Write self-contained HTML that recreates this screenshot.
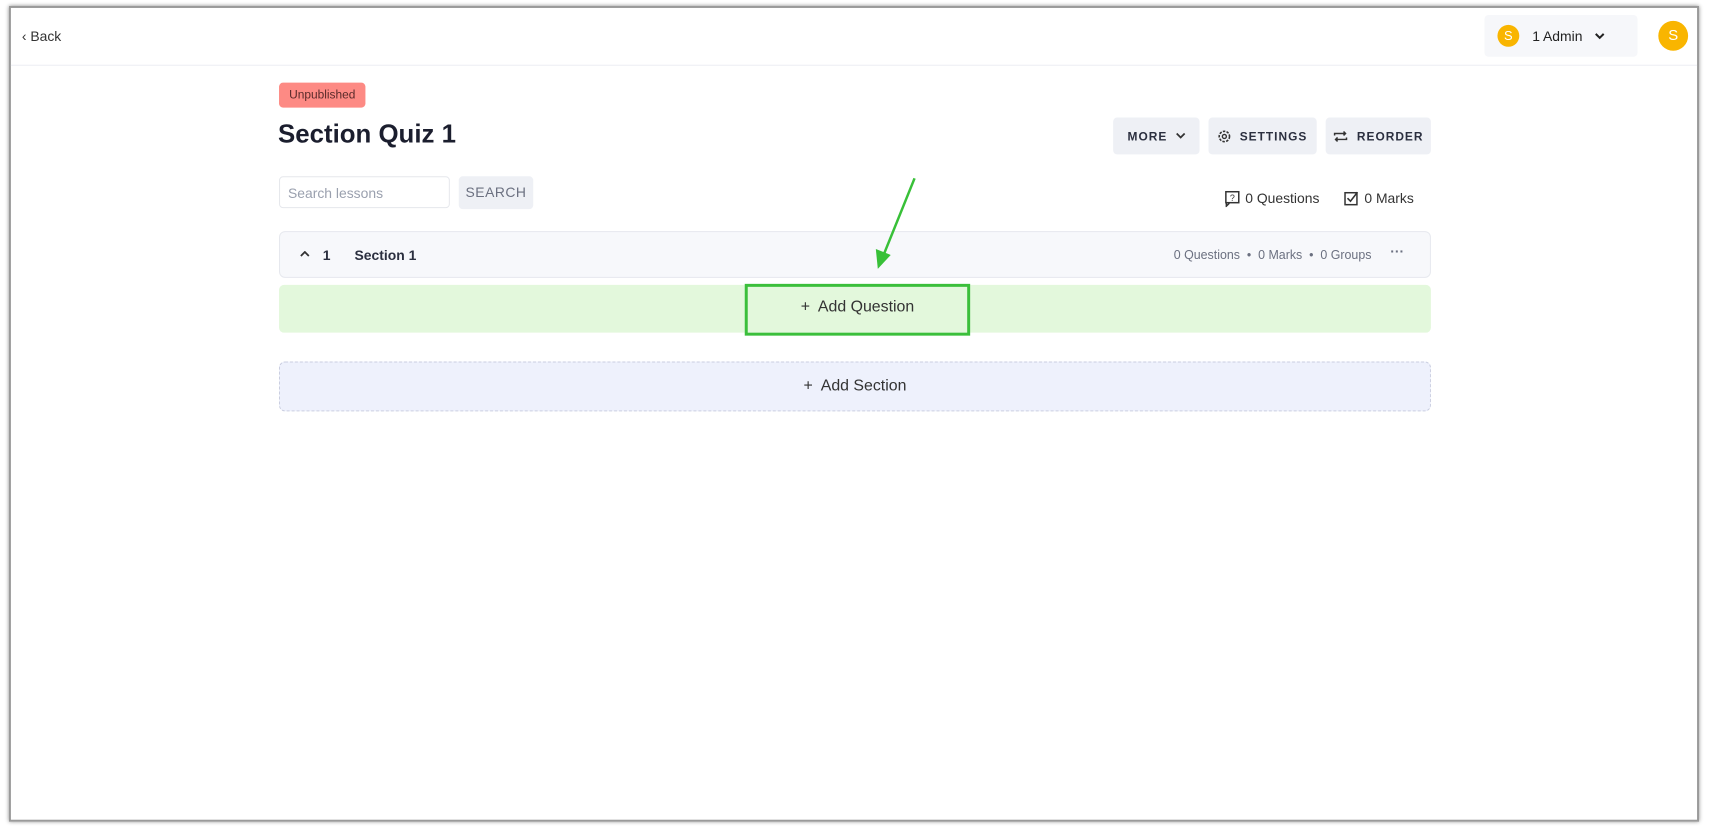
<!DOCTYPE html>
<html><head><meta charset="utf-8"><style>
*{box-sizing:border-box;margin:0;padding:0}
body{width:1720px;height:827px;background:#fff;font-family:"Liberation Sans",sans-serif;position:relative;overflow:hidden;color:#1e2235}
#w{position:absolute;left:0;top:0;width:1720px;height:827px;transform:scale(0.993,0.996);transform-origin:0 0}
.frame{position:absolute;left:9px;top:6px;width:1702px;height:819px;border:2px solid #9a9a9a;box-shadow:0 0 4px #888;background:#fff}
.a{position:absolute}
.btn{position:absolute;background:#eef0f5;border-radius:4px;font-size:12px;font-weight:bold;letter-spacing:1px;color:#2b2f3f;display:flex;align-items:center;justify-content:center;gap:8px}
</style></head><body><div id="w">
<div class="frame"></div>
<div class="a" style="left:11px;top:65px;width:1698px;height:1px;background:#eceef2"></div>
<div class="a" style="left:22px;top:28px;font-size:14px;color:#333">‹ Back</div>
<div class="a" style="left:1495px;top:15px;width:154px;height:42px;background:#f6f7fa;border-radius:4px"></div>
<div class="a" style="left:1508px;top:25px;width:22px;height:22px;border-radius:50%;background:#f9b500;color:#fff;font-size:13px;text-align:center;line-height:22px">S</div>
<div class="a" style="left:1543px;top:28px;font-size:14px;color:#222">1 Admin</div>
<svg class="a" style="left:1605px;top:32px" width="12" height="8"><path d="M2 2l4 4 4-4" stroke="#222" stroke-width="2" fill="none"/></svg>
<div class="a" style="left:1670px;top:21px;width:30px;height:30px;border-radius:50%;background:#f9b500;color:#fff;font-size:15px;text-align:center;line-height:30px">S</div>

<div class="a" style="left:281px;top:83px;width:87px;height:25px;background:#fd8a84;border-radius:4px;font-size:12px;color:#5a2a2a;text-align:center;line-height:25px">Unpublished</div>
<div class="a" style="left:280px;top:119px;font-size:26px;font-weight:bold;color:#1b1e2e">Section Quiz 1</div>

<div class="btn" style="left:1121px;top:118px;width:87px;height:37px">MORE <svg width="10" height="7"><path d="M1 1l4 4 4-4" stroke="#333" stroke-width="1.8" fill="none"/></svg></div>
<div class="btn" style="left:1217px;top:118px;width:109px;height:37px"><svg width="14" height="14" viewBox="0 0 14 14"><circle cx="7" cy="7" r="5.2" stroke="#333" stroke-width="1.6" fill="none" stroke-dasharray="2.5 1.3"/><circle cx="7" cy="7" r="2" stroke="#333" stroke-width="1.4" fill="none"/></svg>SETTINGS</div>
<div class="btn" style="left:1335px;top:118px;width:106px;height:37px"><svg width="16" height="14"><path d="M2 6V4h11M11 2l2 2-2 2M14 8v2H3M5 12l-2-2 2-2" stroke="#333" stroke-width="1.5" fill="none"/></svg>REORDER</div>

<div class="a" style="left:281px;top:177px;width:172px;height:32px;border:1px solid #e5e7ec;border-radius:4px;font-size:14px;color:#9aa0ae;padding:8px 8px">Search lessons</div>
<div class="a" style="left:462px;top:177px;width:75px;height:33px;background:#eef0f5;border-radius:4px;font-size:14px;color:#6b7080;text-align:center;line-height:33px;letter-spacing:.5px">SEARCH</div>

<svg class="a" style="left:1233px;top:191px" width="16" height="17"><rect x="1.5" y="1.5" width="13" height="11" stroke="#333" stroke-width="1.5" fill="none"/><path d="M2 12v4l3-3" stroke="#333" stroke-width="1.5" fill="none"/><text x="5.5" y="11" font-size="9" font-family="Liberation Sans" fill="#333">?</text></svg>
<div class="a" style="left:1254px;top:191px;font-size:14px;color:#333">0 Questions</div>
<svg class="a" style="left:1353px;top:191px" width="16" height="16"><rect x="1.5" y="2.5" width="12" height="12" stroke="#333" stroke-width="1.5" fill="none"/><path d="M4 8l3 3 7-9" stroke="#333" stroke-width="1.6" fill="none"/></svg>
<div class="a" style="left:1374px;top:191px;font-size:14px;color:#333">0 Marks</div>

<div class="a" style="left:281px;top:232px;width:1160px;height:47px;background:#f7f8fb;border:1px solid #e6e8ee;border-radius:6px"></div>
<svg class="a" style="left:302px;top:252px" width="10" height="7"><path d="M1 5l4-4 4 4" stroke="#333" stroke-width="1.8" fill="none"/></svg>
<div class="a" style="left:325px;top:248px;font-size:14px;font-weight:bold;color:#2b2f3f">1</div>
<div class="a" style="left:357px;top:248px;font-size:14px;font-weight:bold;color:#2b2f3f">Section 1</div>
<div class="a" style="left:1182px;top:249px;font-size:12.5px;color:#6b7080">0 Questions &nbsp;•&nbsp; 0 Marks &nbsp;•&nbsp; 0 Groups</div>
<div class="a" style="left:1400px;top:244px;font-size:14px;color:#6b7080;font-weight:bold">···</div>

<div class="a" style="left:281px;top:286px;width:1160px;height:48px;background:#e3f8dc;border-radius:5px"></div>
<div class="a" style="left:750px;top:285px;width:227px;height:52px;border:3px solid #3bbf3b"></div>
<div class="a" style="left:750px;top:300px;width:227px;text-align:center;font-size:16px;color:#333">+&nbsp; Add Question</div>

<div class="a" style="left:281px;top:363px;width:1160px;height:50px;background:#eef1fc;border:1px dashed #c9cde0;border-radius:6px;text-align:center;line-height:48px;font-size:16px;color:#333">+&nbsp; Add Section</div>

<svg class="a" style="left:870px;top:170px" width="70" height="110"><path d="M51 9L19 88" stroke="#38c038" stroke-width="2.5"/><path d="M14 100L12 80 27 86Z" fill="#38c038"/></svg>
</div></body></html>
